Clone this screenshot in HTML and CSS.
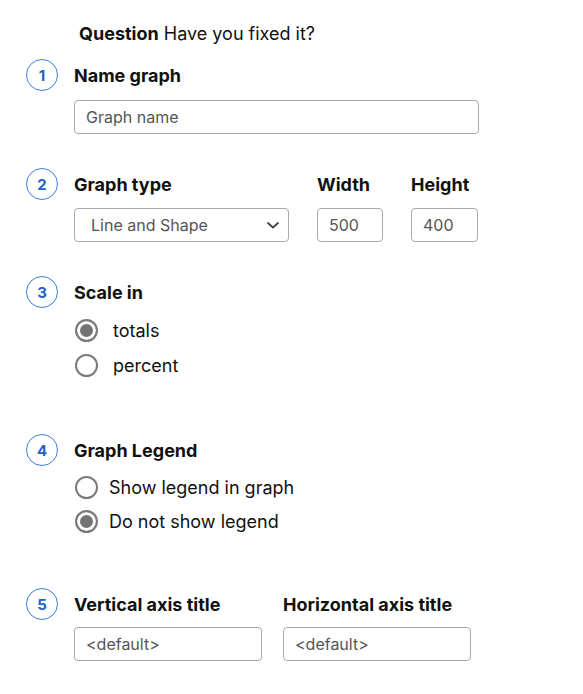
FILE: index.html
```html
<!DOCTYPE html>
<html lang="en">
<head>
    <meta charset="UTF-8">
    <meta name="viewport" content="width=device-width, initial-scale=1.0">
    <title>Graph settings</title>
    <link rel="stylesheet" href="styles.css">
</head>
<body>
    <div class="form">
        <p class="question"><strong>Question</strong> Have you fixed it?</p>

        <!-- 1: name -->
        <section class="step name-step">
            <span class="num">1</span>
            <div class="step-body">
                <h3>Name graph</h3>
                <input type="text" class="field name-field" placeholder="Graph name">
            </div>
        </section>

        <!-- 2: type and size -->
        <section class="step">
            <span class="num">2</span>
            <div class="step-body cols">
                <div class="col type-col">
                    <h3>Graph type</h3>
                    <div class="select-wrap">
                        <select class="field">
                            <option>Line and Shape</option>
                            <option>Bar</option>
                            <option>Pie</option>
                        </select>
                        <svg class="chevron" width="12" height="7" viewBox="0 0 12 7">
                            <path d="M1 1l5 4.5L11 1" fill="none" stroke="#444" stroke-width="1.8" stroke-linecap="round" stroke-linejoin="round"/>
                        </svg>
                    </div>
                </div>
                <div class="col size-col">
                    <h3>Width</h3>
                    <input type="text" class="field" value="500">
                </div>
                <div class="col size-col">
                    <h3>Height</h3>
                    <input type="text" class="field" value="400">
                </div>
            </div>
        </section>

        <!-- 3: scale -->
        <section class="step radio-step">
            <span class="num">3</span>
            <div class="step-body">
                <h3>Scale in</h3>
                <label class="option"><input type="radio" name="scale" checked> totals</label>
                <label class="option"><input type="radio" name="scale"> percent</label>
            </div>
        </section>

        <!-- 4: legend -->
        <section class="step radio-step legend-step">
            <span class="num">4</span>
            <div class="step-body">
                <h3>Graph Legend</h3>
                <label class="option"><input type="radio" name="legend"> Show legend in graph</label>
                <label class="option"><input type="radio" name="legend" checked> Do not show legend</label>
            </div>
        </section>

        <!-- 5: axis titles -->
        <section class="step">
            <span class="num">5</span>
            <div class="step-body cols axis-cols">
                <div class="col axis-col">
                    <h3>Vertical axis title</h3>
                    <input type="text" class="field" placeholder="&lt;default&gt;">
                </div>
                <div class="col axis-col">
                    <h3>Horizontal axis title</h3>
                    <input type="text" class="field" placeholder="&lt;default&gt;">
                </div>
            </div>
        </section>
    </div>
</body>
</html>
```

FILE: styles.css
```css
body {
    margin: 0;
    font-family: Inter, "Noto Sans", sans-serif;
    color: #111;
    background: #fff;
}
.form {
    padding: 22px 0 0 26px;
}
.question {
    margin: 0 0 13px 53px;
    font-size: 18px;
    line-height: 24px;
}
.question strong {
    font-weight: 700;
}
.step {
    display: flex;
    gap: 16px;
    margin-bottom: 34px;
}
.radio-step {
    margin-bottom: 51px;
}
.legend-step {
    margin-bottom: 50px;
}
.num {
    box-sizing: border-box;
    width: 32px;
    height: 32px;
    flex: none;
    border: 1px solid #3d7fd9;
    border-radius: 50%;
    color: #2461c0;
    font-size: 15px;
    font-weight: 700;
    display: flex;
    justify-content: center;
    align-items: center;
}
h3 {
    margin: 0 0 8px;
    font-size: 18px;
    font-weight: 700;
    line-height: 32px;
    position: relative;
    top: 1px;
}
.name-step h3 {
    margin-bottom: 9px;
}
.field {
    box-sizing: border-box;
    height: 34px;
    width: 100%;
    border: 1px solid #a9a9a9;
    border-radius: 4px;
    padding: 0 11px;
    font-family: inherit;
    font-size: 16px;
    color: #555;
    background: #fff;
}
.field::placeholder {
    color: #555;
}
.name-field {
    width: 405px;
}
.cols {
    display: flex;
    gap: 28px;
}
.type-col {
    width: 215px;
}
.size-col {
    width: 66px;
}
.size-col + .size-col {
    width: 67px;
}
.axis-cols {
    gap: 21px;
}
.axis-col {
    width: 188px;
}
.axis-cols h3 {
    margin-bottom: 7px;
}
.select-wrap {
    position: relative;
}
.select-wrap select {
    appearance: none;
    padding-left: 16px;
}
.chevron {
    position: absolute;
    right: 10px;
    top: 14px;
    pointer-events: none;
}
.option {
    display: flex;
    align-items: center;
    gap: 15px;
    height: 35px;
    font-size: 18px;
}
h3 + .option {
    margin-top: -3px;
}
.legend-step h3 + .option {
    margin-top: -4px;
}
.legend-step .option {
    gap: 11px;
    height: 34px;
}
.option input {
    appearance: none;
    box-sizing: border-box;
    width: 23px;
    height: 23px;
    margin: 0 0 0 1px;
    border: 2px solid #7a7a7a;
    border-radius: 50%;
    background: #fff;
}
.option input:checked {
    background: #737373;
    box-shadow: inset 0 0 0 3px #fff;
}
```
